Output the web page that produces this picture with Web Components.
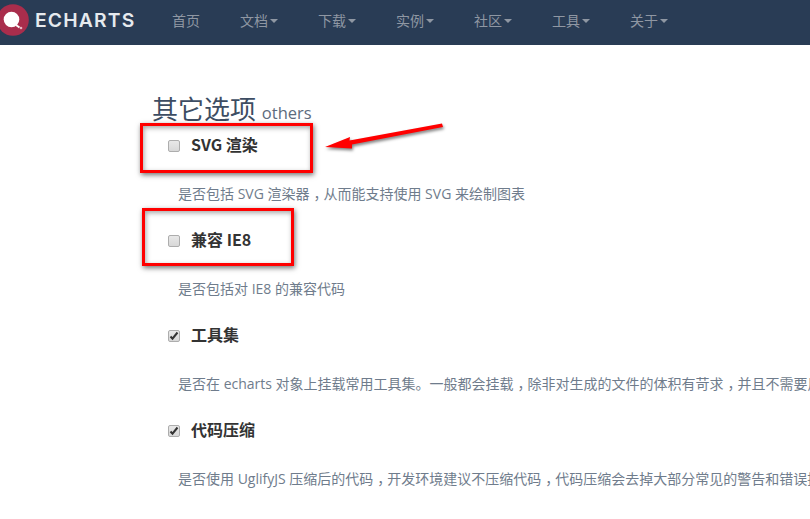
<!DOCTYPE html>
<html>
<head>
<meta charset="utf-8">
<style>
  html, body { margin: 0; padding: 0; height: 100%; overflow: hidden; background: #fff; }
  body { font-family: "Open Sans", "Noto Sans CJK SC", sans-serif; }
</style>
</head>
<body>
<ec-navbar></ec-navbar>
<ec-page heading="其它选项" sub="others">
  <ec-option label="SVG 渲染" desc="是否包括 SVG 渲染器，从而能支持使用 SVG 来绘制图表"></ec-option>
  <ec-option label="兼容 IE8" desc="是否包括对 IE8 的兼容代码"></ec-option>
  <ec-option checked label="工具集" desc="是否在 echarts 对象上挂载常用工具集。一般都会挂载，除非对生成的文件的体积有苛求，并且不需要用到工具集"></ec-option>
  <ec-option checked label="代码压缩" desc="是否使用 UglifyJS 压缩后的代码，开发环境建议不压缩代码，代码压缩会去掉大部分常见的警告和错误提示"></ec-option>
</ec-page>
<ec-callout style="left:140px;top:123px;width:173px;height:50px"></ec-callout>
<ec-callout style="left:142px;top:208px;width:152px;height:58px"></ec-callout>
<ec-arrow></ec-arrow>

<script>
class EcNavbar extends HTMLElement {
  constructor() {
    super();
    this.attachShadow({ mode: 'open' });
    const items = [['首页', false], ['文档', true], ['下载', true], ['实例', true], ['社区', true], ['工具', true], ['关于', true]];
    const links = items.map(([name, caret]) =>
      `<a>${name}${caret ? '<i></i>' : ''}</a>`).join('');
    this.shadowRoot.innerHTML = `
      <style>
        :host { display: flex; align-items: center; box-sizing: border-box; height: 45px; padding-bottom: 5px; background: #293c55; overflow: hidden; }
        .logo { display: block; flex: none; margin-left: -3px; }
        .word {
          flex: none; width: 102px; margin-left: 6px;
          font: 600 19.3px Inter, sans-serif; color: #e6eaee; letter-spacing: 1.2px;
        }
        nav { display: flex; margin-left: 35px; }
        a {
          display: flex; align-items: center; margin-right: 40px;
          font: 14px "Noto Sans CJK SC", sans-serif; color: #8f97a3; white-space: nowrap;
        }
        i { width: 0; height: 0; margin-left: 2px; margin-top: 2px;
            border-top: 4px solid #8f97a3; border-left: 4.5px solid transparent; border-right: 4.5px solid transparent; }
      </style>
      <svg class="logo" width="32" height="32" viewBox="0 0 32 32">
        <circle cx="16" cy="16" r="15.8" fill="#a92d4c"/>
        <circle cx="14.5" cy="15.5" r="7.8" fill="#fff"/>
        <path d="M19 21l3.5 2.5" stroke="#fff" stroke-width="2" fill="none"/>
        <circle cx="24" cy="24" r="1.3" fill="#e8b5c2"/>
      </svg>
      <div class="word">ECHARTS</div>
      <nav>${links}</nav>`;
  }
}
customElements.define('ec-navbar', EcNavbar);

class EcPage extends HTMLElement {
  constructor() {
    super();
    this.attachShadow({ mode: 'open' });
    this.shadowRoot.innerHTML = `
      <style>
        :host { display: block; padding: 48px 0 0 153px; overflow: hidden; }
        h3 { margin: 0 0 8px -1px; font: 400 26px/30px "Noto Sans CJK SC", sans-serif; color: #3d4d63; white-space: nowrap; }
        small { font: 16.5px "Open Sans", sans-serif; color: #5d6b7d; }
      </style>
      <h3></h3>
      <slot></slot>`;
    this.shadowRoot.querySelector('h3').innerHTML =
      `${this.getAttribute('heading')} <small>${this.getAttribute('sub')}</small>`;
  }
}
customElements.define('ec-page', EcPage);

class EcOption extends HTMLElement {
  constructor() {
    super();
    this.attachShadow({ mode: 'open' });
    this.shadowRoot.innerHTML = `
      <style>
        :host { display: block; height: 95px; margin-left: 15px; white-space: nowrap; }
        .row { display: flex; align-items: center; height: 24px; padding-top: 2px; }
        .box {
          flex: none; box-sizing: border-box; width: 12px; height: 12px; border: 1px solid #adadad; border-radius: 2px;
          background: linear-gradient(#e8e8e8, #d8d8d8); display: flex; align-items: center; justify-content: center;
        }
        label { margin: -4px 0 0 11px; font: 700 16px "Noto Sans CJK SC", sans-serif; color: #333; }
        p { margin: 26px 0 0 10px; font: 14px/20px "Open Sans", "Noto Sans CJK SC", sans-serif; color: #6f7c8c; }
        b { font-weight: 400; margin-left: 4px; letter-spacing: -4px; }
        svg { display: block; }
      </style>
      <div class="row"><span class="box"></span><label></label></div>
      <p></p>`;
    this.shadowRoot.querySelector('label').textContent = this.getAttribute('label');
    // the reference has its commas centred in the cell
    this.shadowRoot.querySelector('p').innerHTML = this.getAttribute('desc').replace(/，/g, '<b>，</b>');
    if (this.hasAttribute('checked')) {
      this.shadowRoot.querySelector('.box').innerHTML =
        '<svg width="10" height="10" viewBox="0 0 10 10"><path d="M1.5 5.5l2 2.2L8.5 1.5" stroke="#333" stroke-width="2" fill="none"/></svg>';
    }
  }
}
customElements.define('ec-option', EcOption);

// red annotation boxes sit on top of the page, like the screenshot markup
class EcCallout extends HTMLElement {
  constructor() {
    super();
    this.attachShadow({ mode: 'open' });
    this.shadowRoot.innerHTML = `
      <style>
        :host { position: absolute; box-sizing: border-box; border: 3px solid #f00; box-shadow: 1px 2px 5px rgba(0,0,0,.55), inset 1px 2px 5px rgba(0,0,0,.35); }
      </style>`;
  }
}
customElements.define('ec-callout', EcCallout);

class EcArrow extends HTMLElement {
  constructor() {
    super();
    this.attachShadow({ mode: 'open' });
    this.shadowRoot.innerHTML = `
      <style>
        :host { position: absolute; left: 320px; top: 118px; width: 130px; height: 40px; }
        svg { display: block; overflow: visible; filter: drop-shadow(1px 2px 1.5px rgba(0,0,0,.5)); }
      </style>
      <svg width="130" height="40" viewBox="0 0 130 40">
        <path d="M5 29 L30 19 L29.5 22.5 L122 5.5 L123 9 L32 26.5 L32 30.5 Z" fill="#f00"/>
      </svg>`;
  }
}
customElements.define('ec-arrow', EcArrow);
</script>
</body>
</html>
